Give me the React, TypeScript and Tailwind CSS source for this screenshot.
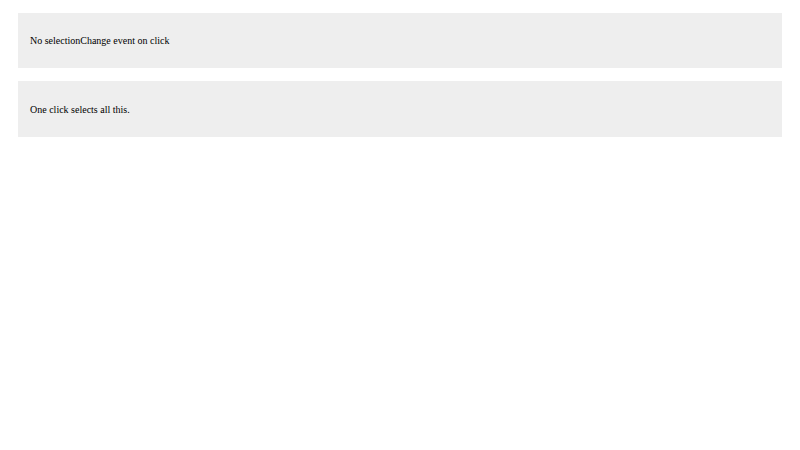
export default function App() {
  return (
    <div className="flex flex-col gap-[13px] px-[18px] pt-[13px] font-['Liberation_Serif',serif] text-[10px] text-black">
      <div className="flex h-[55px] items-center bg-[#eeeeee] px-3">
        No selectionChange event on click
      </div>
      <div className="flex h-[56px] items-center bg-[#eeeeee] px-3">
        One click selects all this.
      </div>
    </div>
  );
}
